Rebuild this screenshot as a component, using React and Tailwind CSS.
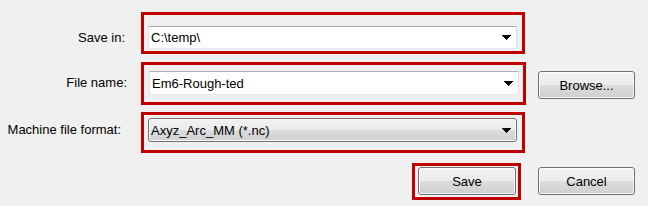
import React from "react";

const Arrow = () => (
  <svg width="9" height="5" viewBox="0 0 9 5" shapeRendering="crispEdges" className="block">
    <rect x="0" y="0" width="9" height="1" fill="#000" />
    <rect x="1" y="1" width="7" height="1" fill="#000" />
    <rect x="2" y="2" width="5" height="1" fill="#000" />
    <rect x="3" y="3" width="3" height="1" fill="#000" />
    <rect x="4" y="4" width="1" height="1" fill="#000" />
  </svg>
);

const EditCombo = ({ text, h }) => (
  <div
    className={`flex items-center justify-between bg-white border border-t-[#abadb3] border-l-[#e2e3ea] border-r-[#dbdfe6] border-b-[#e3e9ef] pl-[2px] pr-[5px] ${h}`}
  >
    <span className="leading-none">{text}</span>
    <Arrow />
  </div>
);

const btnBg =
  "bg-[linear-gradient(to_bottom,#f2f2f2_0%,#ebebeb_50%,#dddddd_50%,#cfcfcf_100%)] shadow-[inset_0_0_0_1px_#fbfbfb] border border-[#707070] rounded-[3px]";

const Button = ({ children, w }) => (
  <div className={`flex items-center justify-center h-[28px] ${w} ${btnBg}`}>
    <span className="leading-none">{children}</span>
  </div>
);

export default function App() {
  return (
    <div
      className="w-[648px] h-[206px] bg-[#f0f0f0] text-black text-[13px] overflow-hidden"
      style={{ fontFamily: '"Liberation Sans", Arial, sans-serif' }}
    >
      {/* Row 1 */}
      <div className="flex pt-[12px]">
        <div className="w-[141px] pt-[14px] pr-[16px]">
          <div className="h-[23px] flex items-center justify-end">Save in:</div>
        </div>
        <div className="w-[384px] h-[42px] border-[3px] border-[#c00000] pt-[11px] pb-[2px] pl-[4px] pr-[5px]">
          <EditCombo text="C:\temp\" h="h-[23px]" />
        </div>
      </div>

      {/* Row 2 */}
      <div className="flex pt-[8px]">
        <div className="w-[141px] pt-[9px] pr-[14px]">
          <div className="h-[24px] flex items-center justify-end">File name:</div>
        </div>
        <div className="w-[385px] h-[43px] border-[3px] border-[#c00000] pt-[6px] pb-[7px] pl-[5px] pr-[4px]">
          <EditCombo text="Em6-Rough-ted" h="h-[24px]" />
        </div>
        <div className="ml-[12px] pt-[9px]">
          <Button w="w-[97px]">Browse...</Button>
        </div>
      </div>

      {/* Row 3 */}
      <div className="flex pt-[7px]">
        <div className="w-[141px] pt-[6px] pr-[20px]">
          <div className="h-[24px] flex items-center justify-end">Machine file format:</div>
        </div>
        <div className="w-[384px] h-[41px] border-[3px] border-[#c00000] pt-[3px] pb-[8px] pl-[4px] pr-[5px]">
          <div className={`flex items-center justify-between h-[24px] pl-[2px] pr-[5px] ${btnBg}`}>
            <span className="leading-none">Axyz_Arc_MM (*.nc)</span>
            <Arrow />
          </div>
        </div>
      </div>

      {/* Row 4 */}
      <div className="flex justify-end items-start pt-[10px] pr-[13px] gap-[17px]">
        <div className="w-[109px] h-[37px] border-[3px] border-[#c00000] pt-[1px] pl-[3px] pr-[2px]">
          <Button w="w-[98px]">Save</Button>
        </div>
        <div className="pt-[4px]">
          <Button w="w-[97px]">Cancel</Button>
        </div>
      </div>
    </div>
  );
}
